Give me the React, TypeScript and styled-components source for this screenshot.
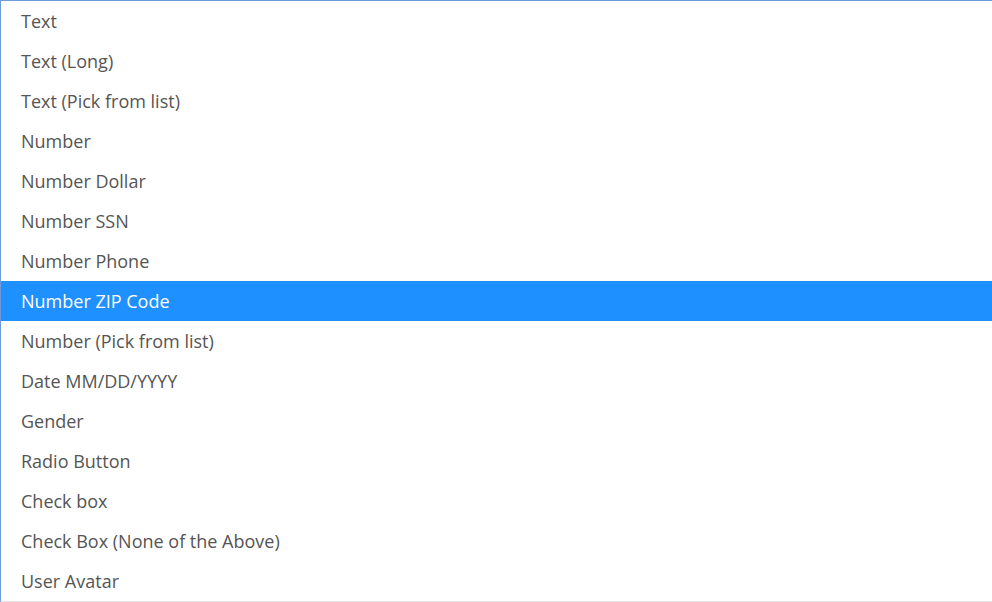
import React from "react";
import styled, { createGlobalStyle } from "styled-components";

const Global = createGlobalStyle`
  html, body { margin: 0; padding: 0; background: #fff; }
  body { font-family: "Open Sans", "Liberation Sans", sans-serif; }
`;

const List = styled.ul`
  list-style: none;
  margin: 0;
  padding: 0;
  width: 992px;
  box-sizing: border-box;
  border-top: 1px solid #6f9ad8;
  border-left: 1px solid #6f9ad8;
  border-bottom: 1px solid #e3e3e3;
  background: #fff;
`;

const Item = styled.li<{ $active?: boolean }>`
  height: 40px;
  box-sizing: border-box;
  display: flex;
  align-items: center;
  padding: 0 0 0 20px;
  font-size: 18px;
  color: ${(p) => (p.$active ? "#fff" : "#555")};
  background: ${(p) => (p.$active ? "#1e90ff" : "transparent")};
`;

const items = [
  "Text",
  "Text (Long)",
  "Text (Pick from list)",
  "Number",
  "Number Dollar",
  "Number SSN",
  "Number Phone",
  "Number ZIP Code",
  "Number (Pick from list)",
  "Date MM/DD/YYYY",
  "Gender",
  "Radio Button",
  "Check box",
  "Check Box (None of the Above)",
  "User Avatar",
];

export default function App() {
  return (
    <>
      <Global />
      <List>
        {items.map((t) => (
          <Item key={t} $active={t === "Number ZIP Code"}>
            {t}
          </Item>
        ))}
      </List>
    </>
  );
}
